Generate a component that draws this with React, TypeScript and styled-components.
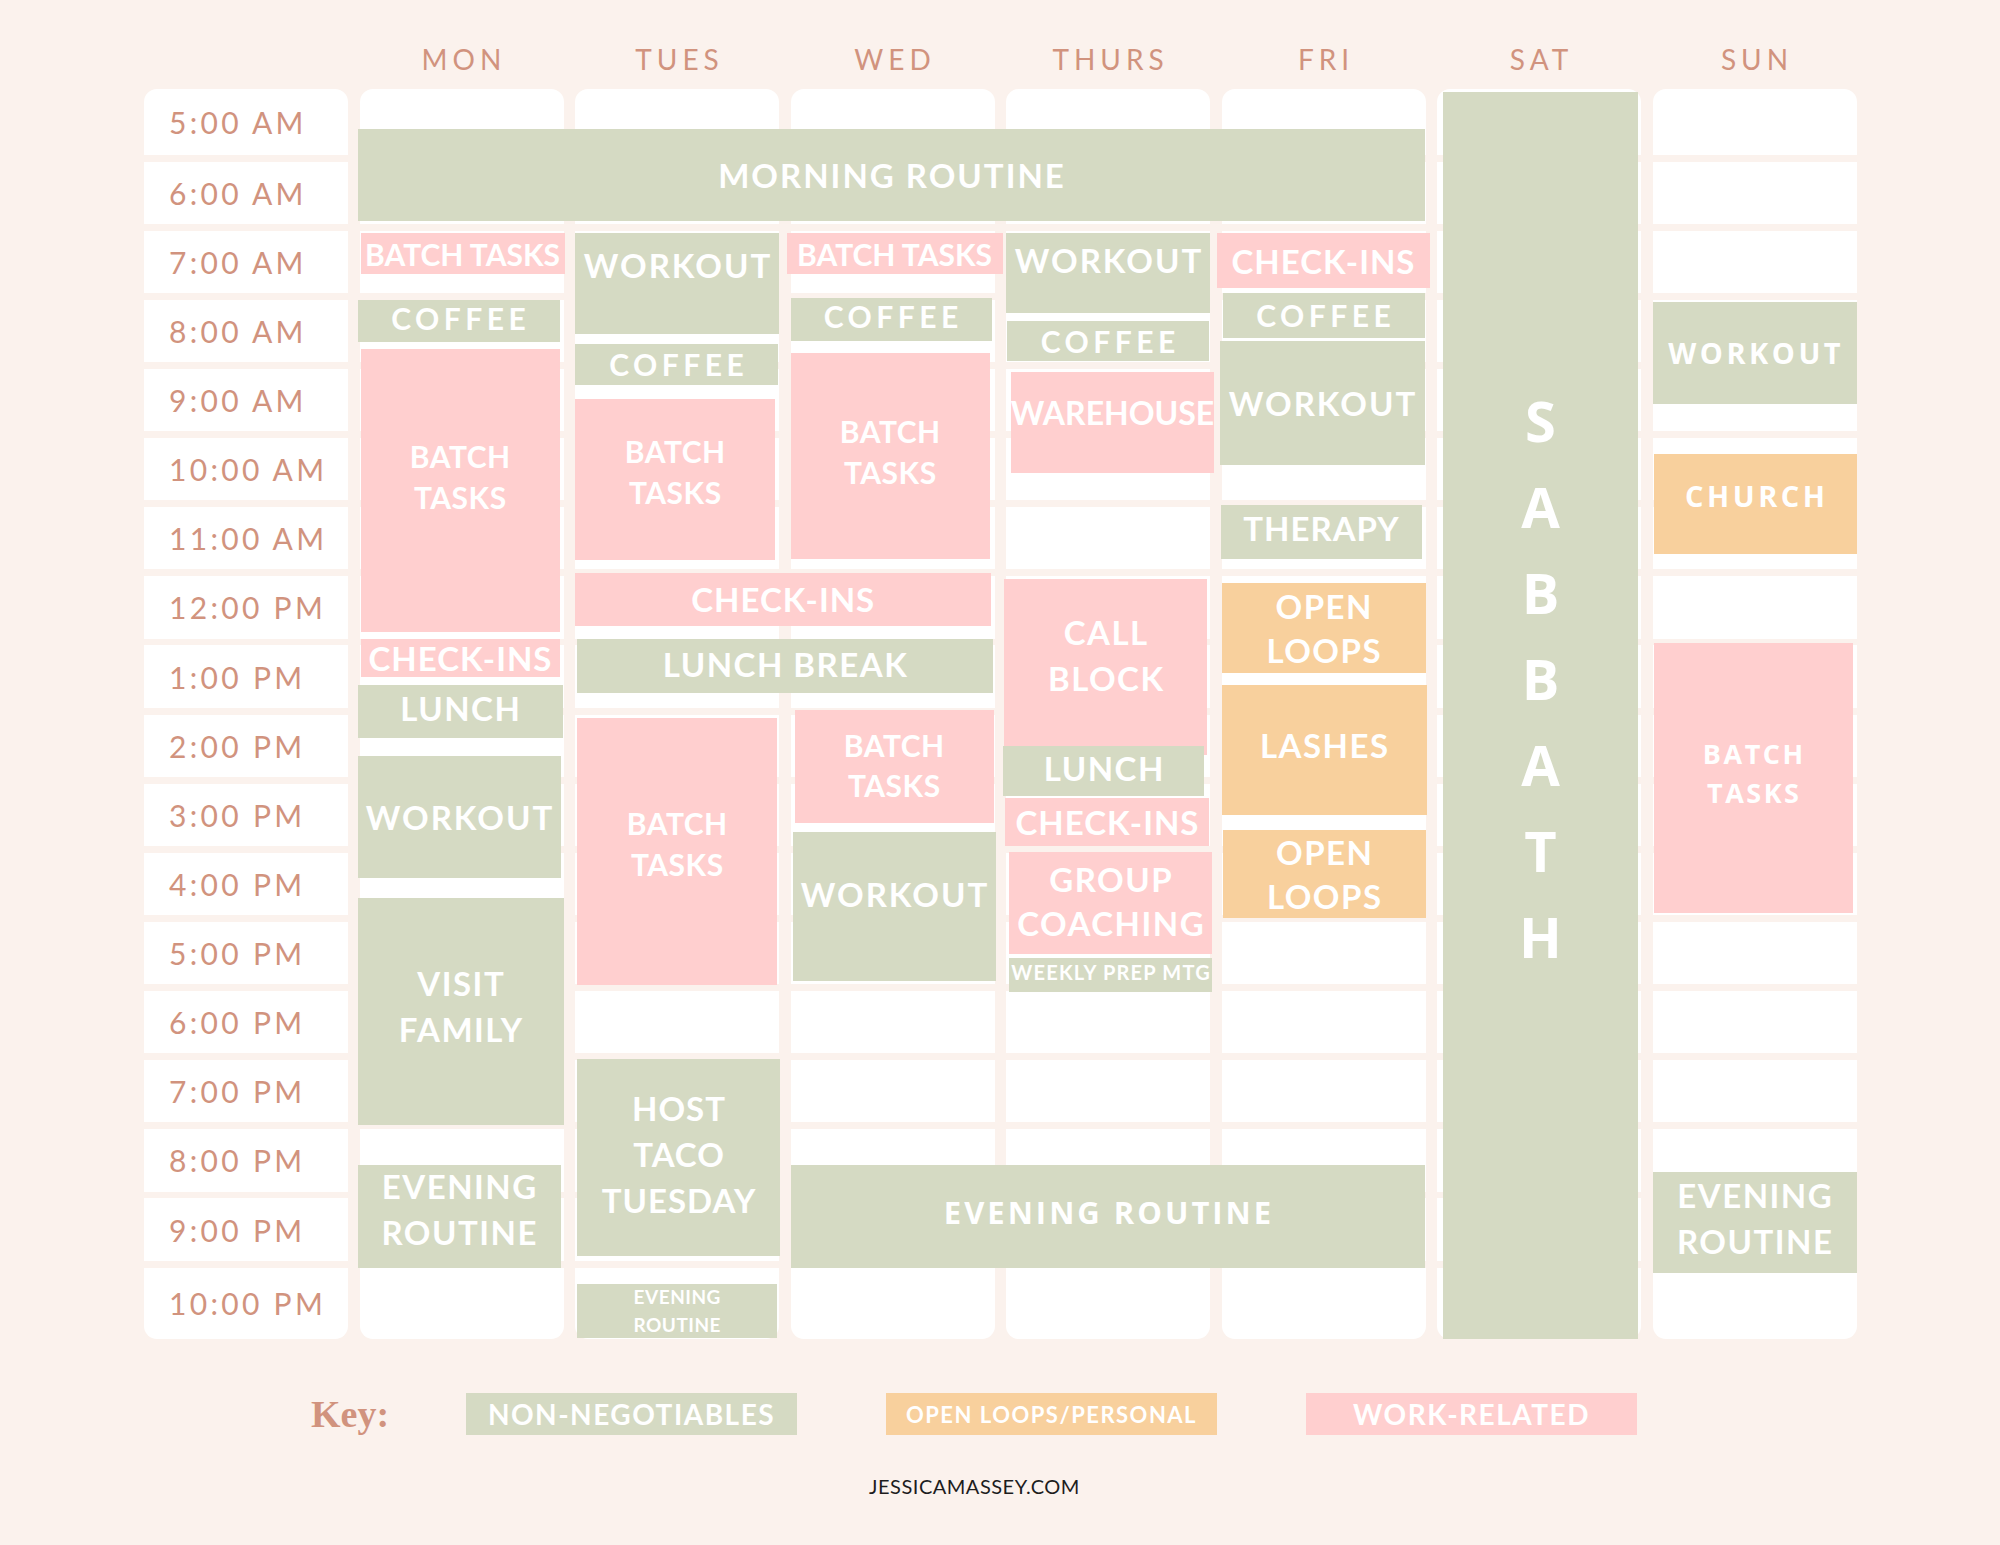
import React from "react";
import styled, { createGlobalStyle } from "styled-components";

const GlobalStyle = createGlobalStyle`
  html, body {
    margin: 0;
    padding: 0;
    background: #fbf2ed;
  }
  body {
    font-family: "Lato", "Open Sans", sans-serif;
  }
`;

type Tone = "sage" | "pink" | "peach";

const tones: Record<Tone, string> = {
  sage: "#d5dac3",
  pink: "#ffcfcf",
  peach: "#f8d09d",
};

const TERRACOTTA = "#d1937e";
const START_HOUR = 5;
const TOTAL_MIN = 1085; // 5:00 AM -> 11:05 PM, one grid row per minute
const COLS = "204px repeat(7, 204px)";
const COL_GAP = "11.5px";

const toMin = (t: string) => {
  const [h, m] = t.split(":").map(Number);
  return (h - START_HOUR) * 60 + m;
};

const DAYS = ["MON", "TUES", "WED", "THURS", "FRI", "SAT", "SUN"];
const HOURS = [
  "5:00 AM", "6:00 AM", "7:00 AM", "8:00 AM", "9:00 AM", "10:00 AM", "11:00 AM",
  "12:00 PM", "1:00 PM", "2:00 PM", "3:00 PM", "4:00 PM", "5:00 PM", "6:00 PM",
  "7:00 PM", "8:00 PM", "9:00 PM", "10:00 PM",
];

type Ev = {
  day: number;
  span?: number;
  from: string;
  to: string;
  lines: string[];
  tone: Tone;
  size?: number;
  ls?: number;
  lh?: number;
  lift?: number;
  inset?: [number, number];
  wide?: boolean;
};

const events: Ev[] = [
  { day: 0, span: 5, from: "5:35", to: "6:55", lines: ["MORNING ROUTINE"], tone: "sage", ls: 2, inset: [-2, 1] },

  // mon
  { day: 0, from: "7:05", to: "7:41", lines: ["BATCH TASKS"], tone: "pink", size: 30, ls: 0, inset: [1, -1] },
  { day: 0, from: "8:03", to: "8:40", lines: ["COFFEE"], tone: "sage", size: 30, ls: 4.5, lift: 3, inset: [-2, 4] },
  { day: 0, from: "8:46", to: "12:51", lines: ["BATCH", "TASKS"], tone: "pink", size: 30, ls: 0.5, lh: 41, lift: 13, inset: [1, 4] },
  { day: 0, from: "12:57", to: "13:30", lines: ["CHECK-INS"], tone: "pink", ls: 1, inset: [1, 4] },
  { day: 0, from: "13:37", to: "14:23", lines: ["LUNCH"], tone: "sage", lift: 3, inset: [-2, 1] },
  { day: 0, from: "14:39", to: "16:25", lines: ["WORKOUT"], tone: "sage", ls: 2, inset: [-2, 3] },
  { day: 0, from: "16:42", to: "19:59", lines: ["VISIT", "FAMILY"], tone: "sage", lift: 5, inset: [-2, 0] },
  { day: 0, from: "20:34", to: "22:03", lines: ["EVENING", "ROUTINE"], tone: "sage", lift: 7, inset: [-2, 3] },

  // tues
  { day: 1, from: "7:05", to: "8:33", lines: ["WORKOUT"], tone: "sage", ls: 2, lift: 19 },
  { day: 1, from: "8:41", to: "9:17", lines: ["COFFEE"], tone: "sage", size: 30, ls: 4.5, inset: [0, 1] },
  { day: 1, from: "9:29", to: "11:49", lines: ["BATCH", "TASKS"], tone: "pink", size: 30, ls: 0.5, lh: 41, lift: 8, inset: [0, 4] },
  { day: 1, span: 2, from: "12:00", to: "12:46", lines: ["CHECK-INS"], tone: "pink", ls: 1, inset: [0, 4] },
  { day: 1, span: 2, from: "12:57", to: "13:44", lines: ["LUNCH BREAK"], tone: "sage", lift: 2, inset: [2, 2] },
  { day: 1, from: "14:06", to: "17:58", lines: ["BATCH", "TASKS"], tone: "pink", size: 30, ls: 0.5, lh: 41, lift: 8, inset: [2, 2] },
  { day: 1, from: "19:02", to: "21:53", lines: ["HOST", "TACO", "TUESDAY"], tone: "sage", ls: 1, lift: 4, inset: [2, -1] },
  { day: 1, from: "22:17", to: "23:04", lines: ["EVENING", "ROUTINE"], tone: "sage", size: 19, ls: 0.5, lh: 28, inset: [2, 2] },

  // wed
  { day: 2, from: "7:05", to: "7:41", lines: ["BATCH TASKS"], tone: "pink", size: 30, ls: 0, inset: [-4, -8] },
  { day: 2, from: "8:01", to: "8:39", lines: ["COFFEE"], tone: "sage", size: 30, ls: 4.5, lift: 3, inset: [0, 3] },
  { day: 2, from: "8:49", to: "11:48", lines: ["BATCH", "TASKS"], tone: "pink", size: 30, ls: 0.5, lh: 41, lift: 4, inset: [0, 5] },
  { day: 2, from: "13:59", to: "15:37", lines: ["BATCH", "TASKS"], tone: "pink", size: 30, ls: 0.5, lh: 40, lift: 1, inset: [4, 1] },
  { day: 2, from: "15:45", to: "17:54", lines: ["WORKOUT"], tone: "sage", ls: 2, lift: 12, inset: [2, -1] },
  { day: 2, span: 3, from: "20:34", to: "22:03", lines: ["EVENING ROUTINE"], tone: "sage", wide: true, size: 31, ls: 3, lift: 4, inset: [0, 1] },

  // thurs
  { day: 3, from: "7:05", to: "8:14", lines: ["WORKOUT"], tone: "sage", ls: 2, lift: 13 },
  { day: 3, from: "8:21", to: "8:56", lines: ["COFFEE"], tone: "sage", size: 30, ls: 4.5, inset: [1, 1] },
  { day: 3, from: "9:06", to: "10:33", lines: ["WAREHOUSE"], tone: "pink", size: 32, ls: 0, lift: 10, inset: [5, -4] },
  { day: 3, from: "12:05", to: "14:38", lines: ["CALL", "BLOCK"], tone: "pink", lift: 12, inset: [-2, 3] },
  { day: 3, from: "14:30", to: "15:14", lines: ["LUNCH"], tone: "sage", lift: 3, inset: [-3, 6] },
  { day: 3, from: "15:15", to: "15:57", lines: ["CHECK-INS"], tone: "pink", ls: 1, inset: [-1, 1] },
  { day: 3, from: "16:02", to: "17:31", lines: ["GROUP", "COACHING"], tone: "pink", lh: 44, lift: 2, inset: [3, -2] },
  { day: 3, from: "17:34", to: "18:04", lines: ["WEEKLY PREP MTG"], tone: "sage", size: 20, ls: 1.2, lift: 3, inset: [3, -2] },

  // fri
  { day: 4, from: "7:05", to: "7:53", lines: ["CHECK-INS"], tone: "pink", ls: 1, inset: [-5, -4] },
  { day: 4, from: "7:57", to: "8:36", lines: ["COFFEE"], tone: "sage", size: 30, ls: 4.5, inset: [1, 1] },
  { day: 4, from: "8:39", to: "10:26", lines: ["WORKOUT"], tone: "sage", ls: 2, inset: [-2, 1] },
  { day: 4, from: "11:01", to: "11:48", lines: ["THERAPY"], tone: "sage", ls: 1, lift: 4, inset: [-1, 4] },
  { day: 4, from: "12:09", to: "13:27", lines: ["OPEN", "LOOPS"], tone: "peach", lh: 44 },
  { day: 4, from: "13:37", to: "15:30", lines: ["LASHES"], tone: "peach", lift: 5, inset: [0, -1] },
  { day: 4, from: "15:43", to: "17:00", lines: ["OPEN", "LOOPS"], tone: "peach", lh: 44, inset: [1, 0] },

  // sun
  { day: 6, from: "8:05", to: "9:33", lines: ["WORKOUT"], tone: "sage", wide: true, size: 29, ls: 3.5 },
  { day: 6, from: "10:17", to: "11:44", lines: ["CHURCH"], tone: "peach", wide: true, size: 29, ls: 3.5, lift: 8, inset: [1, 0] },
  { day: 6, from: "13:01", to: "16:55", lines: ["BATCH", "TASKS"], tone: "pink", wide: true, size: 27, ls: 2.5, lh: 39, lift: 5, inset: [1, 4] },
  { day: 6, from: "20:40", to: "22:08", lines: ["EVENING", "ROUTINE"], tone: "sage", lift: 5 },
];

const Page = styled.div`
  width: 2000px;
  height: 1545px;
  box-sizing: border-box;
  padding: 36px 0 0 144px;
  display: flex;
  flex-direction: column;
`;

const HeaderRow = styled.div`
  display: grid;
  grid-template-columns: ${COLS};
  column-gap: ${COL_GAP};
  height: 46px;
  margin-bottom: 7px;
  align-items: center;
`;

const DayName = styled.div<{ $col: number }>`
  grid-column: ${(p) => p.$col};
  text-align: center;
  font-family: "Lato", sans-serif;
  font-size: 28px;
  letter-spacing: 5px;
  padding-left: 5px;
  color: ${TERRACOTTA};
`;

const Schedule = styled.div`
  display: grid;
  grid-template-columns: ${COLS};
  column-gap: ${COL_GAP};
  grid-template-rows: repeat(${TOTAL_MIN}, minmax(0, 1fr));
  height: 1250px;
  width: max-content;
`;

const Slot = styled.div<{ $col: number; $from: number; $to: number; $radius: string }>`
  grid-column: ${(p) => p.$col};
  grid-row: ${(p) => p.$from + 1} / ${(p) => p.$to + 1};
  background: #fff;
  border-radius: ${(p) => p.$radius};
  display: flex;
  align-items: center;
  min-height: 0;
`;

const TimeLabel = styled.span`
  padding-left: 25px;
  font-family: "Lato", sans-serif;
  font-size: 30px;
  letter-spacing: 3.3px;
  color: ${TERRACOTTA};
  white-space: nowrap;
`;

const Block = styled.div<{
  $col: number;
  $span: number;
  $from: number;
  $to: number;
  $tone: Tone;
  $l: number;
  $r: number;
  $lift: number;
  $size: number;
  $ls: number;
  $lh: number;
  $wide: boolean;
}>`
  grid-column: ${(p) => p.$col} / span ${(p) => p.$span};
  grid-row: ${(p) => p.$from + 1} / ${(p) => p.$to + 1};
  margin: 0 ${(p) => p.$r}px 0 ${(p) => p.$l}px;
  min-height: 0;
  box-sizing: border-box;
  background: ${(p) => tones[p.$tone]};
  display: flex;
  flex-direction: column;
  align-items: center;
  justify-content: center;
  padding-bottom: ${(p) => p.$lift * 2}px;
  color: #fff;
  font-family: ${(p) => (p.$wide ? '"Open Sans", sans-serif' : '"Lato", sans-serif')};
  font-weight: 700;
  font-size: ${(p) => p.$size}px;
  letter-spacing: ${(p) => p.$ls}px;
  line-height: ${(p) => p.$lh}px;
  text-align: center;
  white-space: nowrap;
  overflow: visible;
`;

const Line = styled.span<{ $ls: number }>`
  display: block;
  padding-left: ${(p) => p.$ls}px;
`;

const Sabbath = styled.div`
  grid-column: 7;
  grid-row: 4 / ${TOTAL_MIN + 1};
  margin: 0 3px 0 6px;
  min-height: 0;
  background: ${tones.sage};
  display: flex;
  flex-direction: column;
  align-items: center;
  padding-top: 285px;
  box-sizing: border-box;
  color: #fff;
  font-family: "Open Sans", sans-serif;
  font-weight: 700;
  font-size: 56px;
  line-height: 86px;
`;

const Legend = styled.div`
  display: flex;
  align-items: center;
  height: 42px;
  margin: 54px 0 0 167px;
`;

const KeyLabel = styled.span`
  width: 79px;
  font-family: "Liberation Serif", serif;
  font-weight: 700;
  font-size: 38px;
  color: ${TERRACOTTA};
  margin-right: 76px;
  white-space: nowrap;
`;

const Swatch = styled.div<{ $tone: Tone; $size: number }>`
  width: 331px;
  height: 42px;
  background: ${(p) => tones[p.$tone]};
  display: flex;
  align-items: center;
  justify-content: center;
  color: #fff;
  font-family: "Lato", sans-serif;
  font-weight: 700;
  font-size: ${(p) => p.$size}px;
  letter-spacing: 1.5px;
  & + & {
    margin-left: 89px;
  }
`;

const Footer = styled.div`
  width: 1713px;
  margin-top: 39px;
  padding-right: 52px;
  box-sizing: border-box;
  text-align: center;
  font-family: "Lato", sans-serif;
  font-size: 20px;
  line-height: 24px;
  letter-spacing: 0.5px;
  color: #1d1d1d;
`;

function slotRange(i: number) {
  const from = i === 0 ? 0 : i * 60 + 3;
  const to = i === HOURS.length - 1 ? TOTAL_MIN : (i + 1) * 60 - 3;
  const radius = i === 0 ? "13px 13px 0 0" : i === HOURS.length - 1 ? "0 0 13px 13px" : "0";
  return { from, to, radius };
}

export default function App() {
  return (
    <>
      <GlobalStyle />
      <Page>
        <HeaderRow>
          {DAYS.map((d, i) => (
            <DayName key={d} $col={i + 2}>
              {d}
            </DayName>
          ))}
        </HeaderRow>

        <Schedule>
          {[1, 2, 3, 4, 5, 6, 7, 8].map((col) =>
            HOURS.map((h, i) => {
              const { from, to, radius } = slotRange(i);
              return (
                <Slot key={`${col}-${h}`} $col={col} $from={from} $to={to} $radius={radius}>
                  {col === 1 && <TimeLabel>{h}</TimeLabel>}
                </Slot>
              );
            })
          )}

          {events.map((ev, idx) => {
            const ls = ev.ls ?? 1.5;
            return (
              <Block
                key={idx}
                $col={ev.day + 2}
                $span={ev.span ?? 1}
                $from={toMin(ev.from)}
                $to={toMin(ev.to)}
                $tone={ev.tone}
                $l={ev.inset ? ev.inset[0] : 0}
                $r={ev.inset ? ev.inset[1] : 0}
                $lift={ev.lift ?? 0}
                $size={ev.size ?? 33}
                $ls={ls}
                $lh={ev.lh ?? 46}
                $wide={!!ev.wide}
              >
                {ev.lines.map((line) => (
                  <Line key={line} $ls={ls}>
                    {line}
                  </Line>
                ))}
              </Block>
            );
          })}

          <Sabbath>
            {"SABBATH".split("").map((ch, i) => (
              <span key={i}>{ch}</span>
            ))}
          </Sabbath>
        </Schedule>

        <Legend>
          <KeyLabel>Key:</KeyLabel>
          <Swatch $tone="sage" $size={28}>NON-NEGOTIABLES</Swatch>
          <Swatch $tone="peach" $size={22}>OPEN LOOPS/PERSONAL</Swatch>
          <Swatch $tone="pink" $size={28}>WORK-RELATED</Swatch>
        </Legend>

        <Footer>JESSICAMASSEY.COM</Footer>
      </Page>
    </>
  );
}
